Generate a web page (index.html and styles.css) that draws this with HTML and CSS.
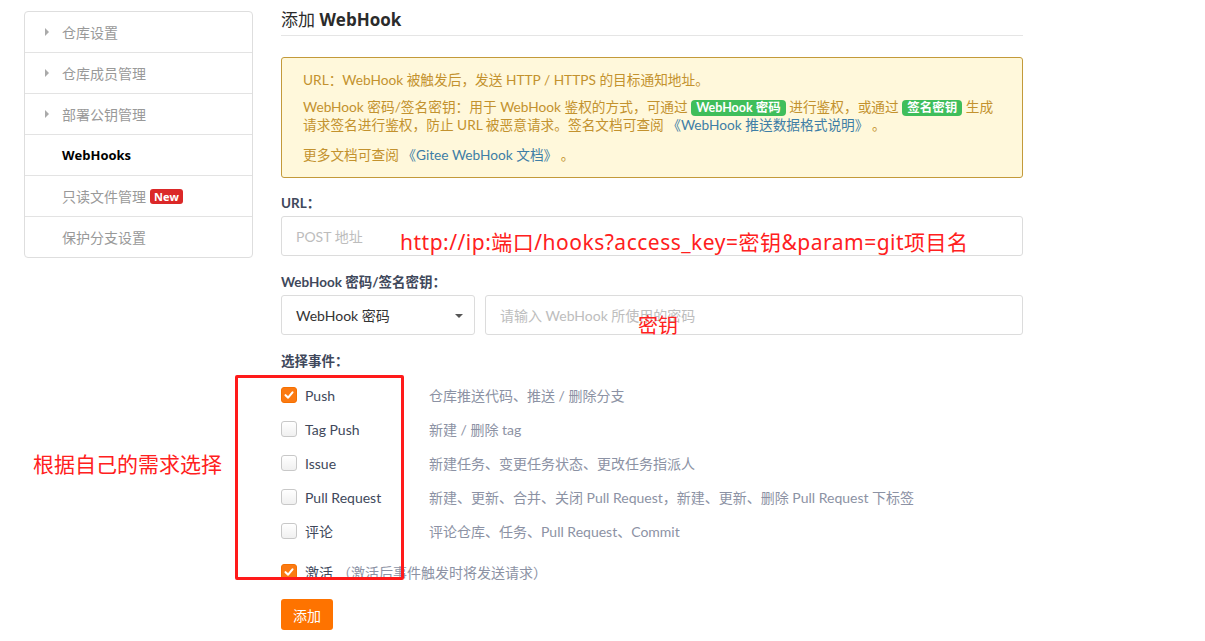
FILE: index.html
```html
<!DOCTYPE html>
<html lang="zh-CN">
<head>
<meta charset="utf-8">
<title>添加 WebHook</title>
<link rel="stylesheet" href="styles.css">
</head>
<body>
<div class="page">
  <nav class="sidebar">
    <div class="item"><span class="arrow"></span>仓库设置</div>
    <div class="item"><span class="arrow"></span>仓库成员管理</div>
    <div class="item"><span class="arrow"></span>部署公钥管理</div>
    <div class="item active">WebHooks</div>
    <div class="item">只读文件管理<span class="new">New</span></div>
    <div class="item">保护分支设置</div>
  </nav>

  <main class="main">
    <h3 class="title"><span class="cn">添加</span> <b>WebHook</b></h3>

    <div class="notice">
      <p>URL：WebHook 被触发后，发送 HTTP / HTTPS 的目标通知地址。</p>
      <p>WebHook 密码/签名密钥：用于 WebHook 鉴权的方式，可通过 <span class="tag">WebHook 密码</span> 进行鉴权，或通过 <span class="tag">签名密钥</span> 生成<br>请求签名进行鉴权，防止 URL 被恶意请求。签名文档可查阅 <a class="link">《WebHook 推送数据格式说明》</a> 。</p>
      <p class="more">更多文档可查阅 <a class="link">《Gitee WebHook 文档》</a> 。</p>
    </div>

    <div class="field first">
      <label class="label">URL：</label>
      <div class="input"><span class="ph">POST 地址</span></div>
    </div>

    <div class="field">
      <label class="label">WebHook 密码/签名密钥：</label>
      <div class="row2">
        <div class="select">WebHook 密码<span class="caret"></span></div>
        <div class="input grow"><span class="ph">请输入 WebHook 所使用的密码</span></div>
      </div>
    </div>

    <div class="field events">
      <label class="label">选择事件：</label>
      <div class="event"><span class="cb on"><svg viewBox="0 0 16 16"><polyline points="4,8.2 7,11 12,5"/></svg></span><span class="name">Push</span><span class="desc">仓库推送代码、推送 / 删除分支</span></div>
      <div class="event"><span class="cb"></span><span class="name">Tag Push</span><span class="desc">新建 / 删除 tag</span></div>
      <div class="event"><span class="cb"></span><span class="name">Issue</span><span class="desc">新建任务、变更任务状态、更改任务指派人</span></div>
      <div class="event"><span class="cb"></span><span class="name">Pull Request</span><span class="desc">新建、更新、合并、关闭 Pull Request，新建、更新、删除 Pull Request 下标签</span></div>
      <div class="event"><span class="cb"></span><span class="name">评论</span><span class="desc">评论仓库、任务、Pull Request、Commit</span></div>
      <div class="event active-row"><span class="cb on"><svg viewBox="0 0 16 16"><polyline points="4,8.2 7,11 12,5"/></svg></span><span class="act">激活</span><span class="desc">（激活后事件触发时将发送请求）</span></div>
    </div>

    <button class="btn">添加</button>
  </main>

  <div class="anno-box"></div>
  <div class="anno anno-url">http://ip:端口/hooks?access_key=密钥&amp;param=git项目名</div>
  <div class="anno anno-key">密钥</div>
  <div class="anno anno-choose">根据自己的需求选择</div>
</div>
</body>
</html>
```

FILE: styles.css
```css
* { box-sizing: border-box; }
html, body { margin: 0; padding: 0; background: #fff; }
body {
  font-family: "Lato", "Noto Sans CJK SC", sans-serif;
  font-size: 14px;
  color: #40485b;
}
.page {
  position: relative;
  display: flex;
  align-items: flex-start;
  gap: 28px;
  padding-left: 24px;
  width: 1205px;
  height: 641px;
  overflow: hidden;
}

/* sidebar */
.sidebar {
  margin-top: 11px;
  width: 229px;
  border: 1px solid #dedede;
  border-radius: 4px;
  flex: none;
}
.item {
  position: relative;
  height: 41px;
  display: flex;
  align-items: center;
  padding-left: 37px;
  font-size: 14px;
  color: #999;
  border-top: 1px solid #e3e3e3;
}
.item:first-child { border-top: none; height: 40px; }
.item.active {
  font-family: "Open Sans", "Noto Sans", sans-serif;
  font-weight: 700;
  font-size: 13px;
  color: #000;
}
.arrow {
  position: absolute;
  left: 20px;
  top: 50%;
  margin-top: -4px;
  width: 0; height: 0;
  border-left: 4px solid #aaa;
  border-top: 4px solid transparent;
  border-bottom: 4px solid transparent;
}
.new {
  margin-left: 4px;
  background: #db2828;
  color: #fff;
  font-family: "Open Sans", sans-serif;
  font-size: 11px;
  font-weight: 700;
  line-height: 15px;
  padding: 0 4px;
  border-radius: 3px;
}

/* main */
.main { width: 742px; flex: none; }
.title {
  margin: 0;
  padding: 8px 0 3px;
  line-height: 24px;
  font-family: "Open Sans", "Noto Sans CJK SC", sans-serif;
  font-size: 17px;
  font-weight: 400;
  color: #2b2b2b;
  border-bottom: 1px solid #e5e5e5;
}
.title b { font-weight: 700; }

.notice {
  margin-top: 21px;
  background: #fff8db;
  border: 1px solid #c39a3a;
  border-radius: 3px;
  padding: 13px 20px 13px 21px;
  color: #c3922e;
  font-size: 13.7px;
  line-height: 18px;
}
.notice p { margin: 0 0 9px; }
.notice p.more { margin: 12px 0 0; }
.link { color: #3e7ea6; text-decoration: none; }
.tag {
  display: inline-block;
  background: #3fbe5b;
  color: #fff;
  font-weight: 700;
  font-size: 12.5px;
  line-height: 16px;
  padding: 0 5px;
  border-radius: 4px;
}

.field { margin-top: 16px; }
.field.first { margin-top: 15px; }
.label {
  display: block;
  line-height: 20px;
  font-size: 13.5px;
  font-weight: 700;
  margin-bottom: 3px;
}
.input {
  height: 40px;
  border: 1px solid #dcdcdc;
  border-radius: 3px;
  display: flex;
  align-items: center;
  padding-left: 14px;
}
.ph { color: #bdbdbd; }
.row2 { display: flex; gap: 10px; }
.select {
  position: relative;
  width: 194px;
  height: 40px;
  border: 1px solid #dcdcdc;
  border-radius: 3px;
  display: flex;
  align-items: center;
  padding-left: 14px;
  color: #333;
}
.caret {
  position: absolute;
  right: 11px;
  top: 18px;
  width: 0; height: 0;
  border-top: 4px solid #555;
  border-left: 4px solid transparent;
  border-right: 4px solid transparent;
}
.grow { flex: 1; }

.events .label { margin-bottom: 7px; }
.event {
  display: flex;
  align-items: center;
  height: 34px;
}
.cb {
  width: 16px;
  height: 16px;
  flex: none;
  border: 1px solid #c8c8c8;
  border-radius: 3px;
  background: linear-gradient(#ffffff, #f0f0f0);
  margin-right: 8px;
  display: flex;
}
.cb.on { background: #fb7a12; border-color: #f57000; }
.cb svg { width: 14px; height: 14px; }
.cb polyline { fill: none; stroke: #fff; stroke-width: 2.4; stroke-linecap: round; stroke-linejoin: round; }
.name { width: 124px; flex: none; }
.desc { color: #8c92a4; }
.active-row { margin-top: 7px; }
.act { margin-right: 4px; font-size: 14px; }

.btn {
  margin-top: 10px;
  height: 31px;
  padding: 0 12px;
  border: none;
  border-radius: 3px;
  background: #fe7300;
  color: #fff;
  font-family: inherit;
  font-size: 14px;
  cursor: pointer;
}

/* red annotations overlaid on screenshot */
.anno-box {
  position: absolute;
  left: 235px;
  top: 375px;
  width: 169px;
  height: 205px;
  border: 3px solid #ff1a1a;
  border-radius: 2px;
}
.anno {
  position: absolute;
  color: #ff2020;
  font-family: "Noto Sans", "Noto Sans CJK SC", sans-serif;
  font-size: 20px;
  line-height: 24px;
  white-space: nowrap;
}
.anno-url { left: 400px; top: 230px; font-size: 21px; letter-spacing: 0.5px; }
.anno-key { left: 638px; top: 314px; }
.anno-choose { left: 33px; top: 452px; font-size: 21px; }
```
